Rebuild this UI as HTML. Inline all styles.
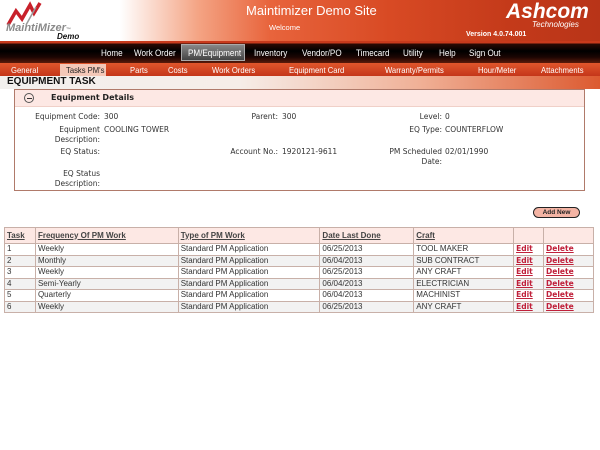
<!DOCTYPE html>
<html><head><meta charset="utf-8"><style>
*{margin:0;padding:0;box-sizing:border-box}
body{width:600px;height:450px;background:#fff;position:relative;overflow:hidden;font-family:"Liberation Sans",Arial,sans-serif}
.a{position:absolute;white-space:nowrap}
#hdr{position:absolute;left:0;top:0;width:600px;height:41px;background:linear-gradient(90deg,#fff 0%,#fff 20%,#f4a484 33%,#e8643c 45%,#d84a24 65%,#c43a1a 85%,#b83418 100%)}
#nav{position:absolute;left:0;top:41px;width:600px;height:22px;background:linear-gradient(#c83a1c 0,#c83a1c 2px,#2a0a04 3px,#000 10px,#1a0502 16px,#5a1a0a 22px)}
#nav span{position:absolute;top:7px;color:#fff;font-size:9px;transform:scaleX(.9);transform-origin:left}
#sub{position:absolute;left:0;top:63px;width:600px;height:13px;background:linear-gradient(#e0562c,#c4361a)}
#sub span{position:absolute;top:2px;color:#fff;font-size:8.5px;transform:scaleX(.9);transform-origin:left}
#et{position:absolute;left:0;top:76px;width:600px;height:13px;background:linear-gradient(90deg,#f2f0ee 0%,#f6ede8 40%,#f0b096 70%,#dc5a30 100%)}
#panel{position:absolute;left:14px;top:89px;width:571px;height:102px;border:1px solid #b07a6a;background:#fff}
#ph{position:absolute;left:0;top:0;width:569px;height:17px;background:#fde8e4;border-bottom:1px solid #f0d0c8}
.d{position:absolute;font-family:"DejaVu Sans",Verdana,sans-serif;font-size:7.5px;color:#333;line-height:10px}
.r{text-align:right}
table{position:absolute;left:4px;top:227px;width:590px;border-collapse:collapse;font-size:8px;color:#333}
td{border:1px solid #c8b0a8;height:11.5px;padding:0 2px;line-height:10px;white-space:nowrap}
tr.h td{height:16px;background:#fde8e4;text-decoration:underline;font-weight:bold;color:#444}
tr:nth-child(odd):not(.h) td{background:#f2f2f2}
table{border:1px solid #8a5040}
.l{color:#c0203a;font-weight:bold;text-decoration:underline;font-family:"DejaVu Sans",Verdana,sans-serif;font-size:7.5px}
</style></head><body>
<div id="hdr"></div>
<svg class="a" style="left:6px;top:1px" width="40" height="26" viewBox="0 0 40 26"><path d="M2 24 L10 10 L16 18 L24 4 L28 12 L34 2" fill="none" stroke="#c8202a" stroke-width="3.5"/><path d="M20 24 L30 6" stroke="#999" stroke-width="1.5" fill="none"/></svg>
<div class="a" style="left:6px;top:22px;font-size:11px;font-weight:bold;font-style:italic;color:#8a8a8a">MaintiMizer<span style="font-size:5px">™</span></div>
<div class="a" style="left:57px;top:32px;font-size:8px;font-weight:bold;font-style:italic;color:#111">Demo</div>
<div class="a" style="left:246px;top:3px;font-size:13px;color:#fff">Maintimizer Demo Site</div>
<div class="a" style="left:269px;top:23px;font-size:7.5px;color:#fff">Welcome</div>
<div class="a" style="left:506px;top:0px;font-size:21px;font-weight:bold;font-style:italic;color:#fff">Ashcom</div>
<div class="a" style="left:532px;top:20px;font-size:8px;font-style:italic;color:#fff">Technologies</div>
<div class="a" style="left:466px;top:31px;font-size:7px;font-weight:bold;color:#fff">Version 4.0.74.001</div>
<div id="nav">
<div style="position:absolute;left:181px;top:3px;width:64px;height:17px;background:linear-gradient(#888,#444);border:1px solid #aaa"></div>
<span style="left:101px">Home</span><span style="left:134px">Work Order</span><span style="left:188px">PM/Equipment</span><span style="left:254px">Inventory</span><span style="left:302px">Vendor/PO</span><span style="left:356px">Timecard</span><span style="left:403px">Utility</span><span style="left:439px">Help</span><span style="left:469px">Sign Out</span>
</div>
<div id="sub">
<div style="position:absolute;left:60px;top:1px;width:46px;height:12px;background:#f4c8b8"></div>
<span style="left:11px">General</span><span style="left:66px;color:#222">Tasks PM's</span><span style="left:130px">Parts</span><span style="left:168px">Costs</span><span style="left:212px">Work Orders</span><span style="left:289px">Equipment Card</span><span style="left:385px">Warranty/Permits</span><span style="left:478px">Hour/Meter</span><span style="left:541px">Attachments</span>
</div>
<div id="et"><div class="a" style="left:7px;top:0;font-size:10px;font-weight:bold;color:#111">EQUIPMENT TASK</div></div>
<div id="panel">
<div id="ph"><div class="a" style="left:9px;top:3px;width:10px;height:10px;border:1px solid #555;border-radius:50%"></div><div class="a" style="left:12px;top:8px;width:5px;height:1px;background:#333"></div><div class="a" style="left:36px;top:3px;font-family:'DejaVu Sans',Verdana,sans-serif;font-size:8px;font-weight:bold;color:#222">Equipment Details</div></div>
</div>
<div class="d r" style="left:10px;top:112px;width:90px">Equipment Code:</div><div class="d" style="left:104px;top:112px">300</div>
<div class="d r" style="left:190px;top:112px;width:88px">Parent:</div><div class="d" style="left:282px;top:112px">300</div>
<div class="d r" style="left:370px;top:112px;width:72px">Level:</div><div class="d" style="left:445px;top:112px">0</div>
<div class="d r" style="left:10px;top:125px;width:90px">Equipment<br>Description:</div><div class="d" style="left:104px;top:125px">COOLING TOWER</div>
<div class="d r" style="left:370px;top:125px;width:72px">EQ Type:</div><div class="d" style="left:445px;top:125px">COUNTERFLOW</div>
<div class="d r" style="left:10px;top:147px;width:90px">EQ Status:</div>
<div class="d r" style="left:190px;top:147px;width:88px">Account No.:</div><div class="d" style="left:282px;top:147px">1920121-9611</div>
<div class="d r" style="left:360px;top:147px;width:82px">PM Scheduled<br>Date:</div><div class="d" style="left:445px;top:147px">02/01/1990</div>
<div class="d r" style="left:10px;top:169px;width:90px">EQ Status<br>Description:</div>
<div class="a" style="left:533px;top:207px;width:47px;height:11px;border:1px solid #222;border-radius:6px;background:#f4b4a4;font-size:6.5px;font-weight:bold;text-align:center;line-height:9px;color:#222">Add New</div>
<table>
<colgroup><col style="width:31px"><col style="width:143px"><col style="width:142px"><col style="width:94px"><col style="width:100px"><col style="width:30px"><col style="width:50px"></colgroup>
<tr class="h"><td>Task</td><td>Frequency Of PM Work</td><td>Type of PM Work</td><td>Date Last Done</td><td>Craft</td><td style="text-decoration:none"></td><td style="text-decoration:none"></td></tr>
<tr><td>1</td><td>Weekly</td><td>Standard PM Application</td><td>06/25/2013</td><td>TOOL MAKER</td><td class="l">Edit</td><td class="l">Delete</td></tr>
<tr><td>2</td><td>Monthly</td><td>Standard PM Application</td><td>06/04/2013</td><td>SUB CONTRACT</td><td class="l">Edit</td><td class="l">Delete</td></tr>
<tr><td>3</td><td>Weekly</td><td>Standard PM Application</td><td>06/25/2013</td><td>ANY CRAFT</td><td class="l">Edit</td><td class="l">Delete</td></tr>
<tr><td>4</td><td>Semi-Yearly</td><td>Standard PM Application</td><td>06/04/2013</td><td>ELECTRICIAN</td><td class="l">Edit</td><td class="l">Delete</td></tr>
<tr><td>5</td><td>Quarterly</td><td>Standard PM Application</td><td>06/04/2013</td><td>MACHINIST</td><td class="l">Edit</td><td class="l">Delete</td></tr>
<tr><td>6</td><td>Weekly</td><td>Standard PM Application</td><td>06/25/2013</td><td>ANY CRAFT</td><td class="l">Edit</td><td class="l">Delete</td></tr>
</table>
</body></html>
